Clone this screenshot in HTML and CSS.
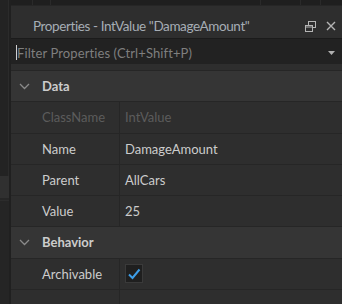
FILE: index.html
```html
<!DOCTYPE html>
<html lang="en">
<head>
    <meta charset="UTF-8">
    <title>Properties</title>
    <link rel="stylesheet" href="styles.css">
</head>
<body>
    <div class="side">
        <div class="side-top"></div>
        <div class="side-tab"></div>
        <div class="side-bottom"></div>
    </div>
    <div class="main">
        <div class="top-strip">
            <span class="strip-cell w1"></span>
            <span class="strip-cell w2"></span>
            <span class="strip-cell w3"></span>
            <span class="strip-cell w4"></span>
            <span class="strip-cell w5"></span>
        </div>
        <div class="panel">
            <div class="title-bar">
                <div class="title">Properties - IntValue "DamageAmount"</div>
                <div class="title-icons">
                    <svg width="11" height="11" viewBox="0 0 11 11">
                        <rect x="3.5" y="0.5" width="7" height="6" fill="none" stroke="#b5b5b5" stroke-width="1"/>
                        <rect x="0.5" y="4.5" width="7" height="6" fill="#2e2e2e" stroke="#b5b5b5" stroke-width="1"/>
                        <line x1="0.5" y1="6" x2="7.5" y2="6" stroke="#b5b5b5" stroke-width="1"/>
                    </svg>
                    <svg width="10" height="10" viewBox="0 0 10 10">
                        <path d="M1 1 L9 9 M9 1 L1 9" stroke="#b5b5b5" stroke-width="1.4"/>
                    </svg>
                </div>
            </div>
            <div class="filter">
                <span class="caret"></span>
                <span class="filter-text">Filter Properties (Ctrl+Shift+P)</span>
                <svg class="drop" width="7" height="4" viewBox="0 0 7 4">
                    <path d="M0 0 L7 0 L3.5 4 Z" fill="#b0b0b0"/>
                </svg>
            </div>
            <div class="table">
                <div class="section">
                    <svg class="chev" width="11" height="7" viewBox="0 0 11 7">
                        <path d="M1 1 L5.5 5.5 L10 1" fill="none" stroke="#8a8a8a" stroke-width="1.3"/>
                    </svg>
                    <span>Data</span>
                </div>
                <div class="row disabled">
                    <div class="label">ClassName</div>
                    <div class="value">IntValue</div>
                </div>
                <div class="row">
                    <div class="label">Name</div>
                    <div class="value">DamageAmount</div>
                </div>
                <div class="row">
                    <div class="label">Parent</div>
                    <div class="value">AllCars</div>
                </div>
                <div class="row">
                    <div class="label">Value</div>
                    <div class="value">25</div>
                </div>
                <div class="section">
                    <svg class="chev" width="11" height="7" viewBox="0 0 11 7">
                        <path d="M1 1 L5.5 5.5 L10 1" fill="none" stroke="#8a8a8a" stroke-width="1.3"/>
                    </svg>
                    <span>Behavior</span>
                </div>
                <div class="row">
                    <div class="label">Archivable</div>
                    <div class="value">
                        <span class="checkbox">
                            <svg width="14" height="12" viewBox="0 0 14 12">
                                <path d="M2 6.5 L5.5 10 L12.5 1.5" fill="none" stroke="#3d9ee8" stroke-width="2"/>
                            </svg>
                        </span>
                    </div>
                </div>
                <div class="row empty">
                    <div class="label"></div>
                </div>
            </div>
        </div>
    </div>
</body>
</html>
```

FILE: styles.css
```css
* {
    margin: 0;
    padding: 0;
    box-sizing: border-box;
}

body {
    width: 342px;
    height: 304px;
    overflow: hidden;
    display: flex;
    background: #2e2e2e;
    font-family: 'Lato', 'Open Sans', sans-serif;
    font-size: 13px;
}

.side {
    width: 11px;
    flex-shrink: 0;
    display: flex;
    flex-direction: column;
    background: #262626;
    border-right: 2px solid #202020;
}

.side-top {
    height: 176px;
    flex-shrink: 0;
    background: #232323;
    border-right: 1px solid #2b2b2b;
}

.side-tab {
    height: 24px;
    flex-shrink: 0;
    background: #303030;
    border-bottom: 2px solid #262626;
}

.side-bottom {
    flex: 1;
    background: #252525;
    border-top: 1px solid #2c2c2c;
}

.main {
    flex: 1;
    display: flex;
    flex-direction: column;
    overflow: hidden;
}

.top-strip {
    height: 6px;
    flex-shrink: 0;
    display: flex;
    background: #1f1f1f;
    border-bottom: 1px solid #262626;
}

.strip-cell {
    height: 100%;
    border-right: 1px solid #2a2a2a;
}

.w1 { width: 22px; }
.w2 { width: 18px; }
.w3 { width: 210px; }
.w4 { width: 40px; }
.w5 { width: 20px; }

.panel {
    flex: 1;
    display: flex;
    flex-direction: column;
    overflow: hidden;
    background: #2e2e2e;
}

.title-bar {
    height: 32px;
    flex-shrink: 0;
    display: flex;
    align-items: center;
    padding-top: 8px;
    padding-left: 22px;
}

.title {
    flex: 1;
    color: #a6adb5;
    font-size: 13.5px;
    letter-spacing: -0.4px;
}

.title-icons {
    display: flex;
    align-items: center;
    gap: 10px;
    padding-right: 6px;
}

.filter {
    height: 26px;
    flex-shrink: 0;
    display: flex;
    align-items: center;
    background: #222222;
    border-top: 1px solid #1b1b1b;
    padding-left: 5px;
    padding-right: 7px;
    padding-top: 2px;
}

.caret {
    width: 1px;
    height: 15px;
    background: #cfcfcf;
}

.filter-text {
    flex: 1;
    color: #7f7f7f;
    font-size: 13px;
    letter-spacing: 0.1px;
}

.drop {
    margin-top: 1px;
}

.table {
    margin-top: 6px;
    flex-shrink: 0;
    display: flex;
    flex-direction: column;
    border-top: 1px solid #262626;
}

.section {
    height: 31.25px;
    flex-shrink: 0;
    display: flex;
    align-items: center;
    background: #353535;
    border-bottom: 1px solid #262626;
    color: #cccccc;
    font-weight: bold;
    font-size: 13px;
}

.chev {
    margin-left: 8px;
    margin-right: 12px;
}

.row {
    height: 31.25px;
    flex-shrink: 0;
    display: flex;
    border-bottom: 1px solid #262626;
    color: #cccccc;
}

.label {
    width: 109px;
    padding-left: 31px;
    display: flex;
    align-items: center;
    border-right: 1px solid #262626;
}

.value {
    flex: 1;
    padding-left: 5px;
    display: flex;
    align-items: center;
}

.disabled {
    color: #5c5c5c;
}

.checkbox {
    width: 18px;
    height: 19px;
    display: flex;
    align-items: center;
    justify-content: center;
    background: #1f1f1f;
    border: 1px solid #3a3a3a;
}
```
